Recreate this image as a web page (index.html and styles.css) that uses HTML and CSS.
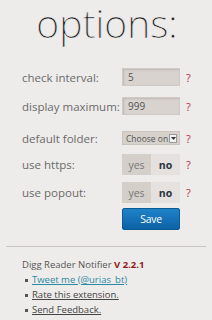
FILE: index.html
```html
<!DOCTYPE html>
<html lang="en">
<head>
    <meta charset="UTF-8">
    <title>Options - Digg Reader Notifier</title>
    <link rel="stylesheet" href="styles.css">
</head>
<body>
    <h1 class="page-title">options:</h1>

    <!-- Settings form -->
    <div class="options-grid">
        <label class="opt-label">check interval:</label>
        <div class="opt-input">5</div>
        <span class="opt-help">?</span>

        <label class="opt-label">display maximum:</label>
        <div class="opt-input">999</div>
        <span class="opt-help">?</span>

        <label class="opt-label">default folder:</label>
        <div class="opt-select">
            <span class="select-text">Choose on</span>
            <span class="select-arrow">
                <svg width="5" height="3" viewBox="0 0 5 3"><path d="M0 0h5L2.5 3z" fill="#333"/></svg>
            </span>
        </div>
        <span class="opt-help">?</span>

        <label class="opt-label">use https:</label>
        <div class="opt-toggle">
            <span class="toggle-yes">yes</span>
            <span class="toggle-no">no</span>
        </div>
        <span class="opt-help">?</span>

        <label class="opt-label">use popout:</label>
        <div class="opt-toggle">
            <span class="toggle-yes">yes</span>
            <span class="toggle-no">no</span>
        </div>
        <span class="opt-help">?</span>

        <span></span>
        <button class="save-btn">Save</button>
        <span></span>
    </div>

    <!-- Footer -->
    <div class="footer">
        <div class="footer-name">Digg Reader Notifier <b class="version">V 2.2.1</b></div>
        <ul class="footer-links">
            <li><a href="#" class="link-tweet">Tweet me (@urias_bt)</a></li>
            <li><a href="#">Rate this extension.</a></li>
            <li><a href="#">Send Feedback.</a></li>
        </ul>
    </div>
</body>
</html>
```

FILE: styles.css
```css
* {
    margin: 0;
    padding: 0;
    box-sizing: border-box;
}

body {
    background-color: #eeecea;
    color: #666;
    font-family: 'Open Sans', 'DejaVu Sans', sans-serif;
    width: 212px;
    height: 320px;
    overflow: hidden;
}

/* no light cut of the font here, so thin the strokes a little with a background-coloured outline */
.page-title {
    font-family: 'Open Sans', sans-serif;
    font-size: 39px;
    font-weight: 300;
    color: #111;
    -webkit-text-stroke: 0.6px #eeecea;
    -webkit-font-smoothing: antialiased;
    text-align: center;
    line-height: 46px;
    height: 66px;
    padding-left: 2px;
}

.options-grid {
    display: grid;
    grid-template-columns: 100px 58px 20px;
    grid-template-rows: 22px 36px 28px 25px 31px 22px;
    align-items: center;
    padding-left: 22px;
}

.opt-label {
    font-size: 11.5px;
    color: #6a6a6a;
    white-space: nowrap;
}

.opt-help {
    font-size: 11px;
    color: #b8323a;
    padding-left: 6px;
}

.opt-input {
    height: 18px;
    background: #d8d3ce;
    border: 1px solid #cfcac4;
    box-shadow: inset 1px 1px 2px rgba(0, 0, 0, 0.12);
    font-size: 10px;
    line-height: 16px;
    padding-left: 5px;
    color: #555;
}

.opt-select {
    height: 14px;
    background: #d6d1cb;
    border: 1px solid #c9c4be;
    display: flex;
    align-items: center;
    justify-content: space-between;
    padding: 0 2px 0 3px;
    font-size: 8.5px;
    color: #555;
}

.select-arrow {
    width: 8px;
    height: 9px;
    background: #f2f2f2;
    border: 1px solid #999;
    display: flex;
    align-items: center;
    justify-content: center;
}

.opt-toggle {
    height: 21px;
    display: flex;
    font-size: 10.5px;
}

.toggle-yes,
.toggle-no {
    flex: 1;
    display: flex;
    align-items: center;
    justify-content: center;
}

.toggle-yes {
    background: #d4cfc9;
    color: #777;
}

.toggle-no {
    background: #e4e1de;
    color: #2a3340;
    font-weight: 700;
}

.save-btn {
    height: 22px;
    border: 1px solid #0b5a94;
    border-radius: 2px;
    background: linear-gradient(#1f82c8, #0d62a6);
    color: #fff;
    font-family: 'Open Sans', sans-serif;
    font-size: 10.5px;
    letter-spacing: -0.3px;
}

.footer {
    margin: 16px 6px 0;
    border-top: 1px solid #c9c6c3;
    padding: 10px 0 0 16px;
    font-size: 9.5px;
    color: #555;
}

.footer-name {
    line-height: 15px;
}

.version {
    color: #8e1c1c;
}

.footer-links {
    list-style: none;
}

.footer-links li {
    line-height: 15px;
    position: relative;
    padding-left: 10px;
}

.footer-links li::before {
    content: "";
    position: absolute;
    left: 3px;
    top: 7px;
    width: 3px;
    height: 3px;
    background: #555;
}

.footer-links a {
    color: #444;
}

.footer-links .link-tweet {
    color: #2b8aa3;
}
```
